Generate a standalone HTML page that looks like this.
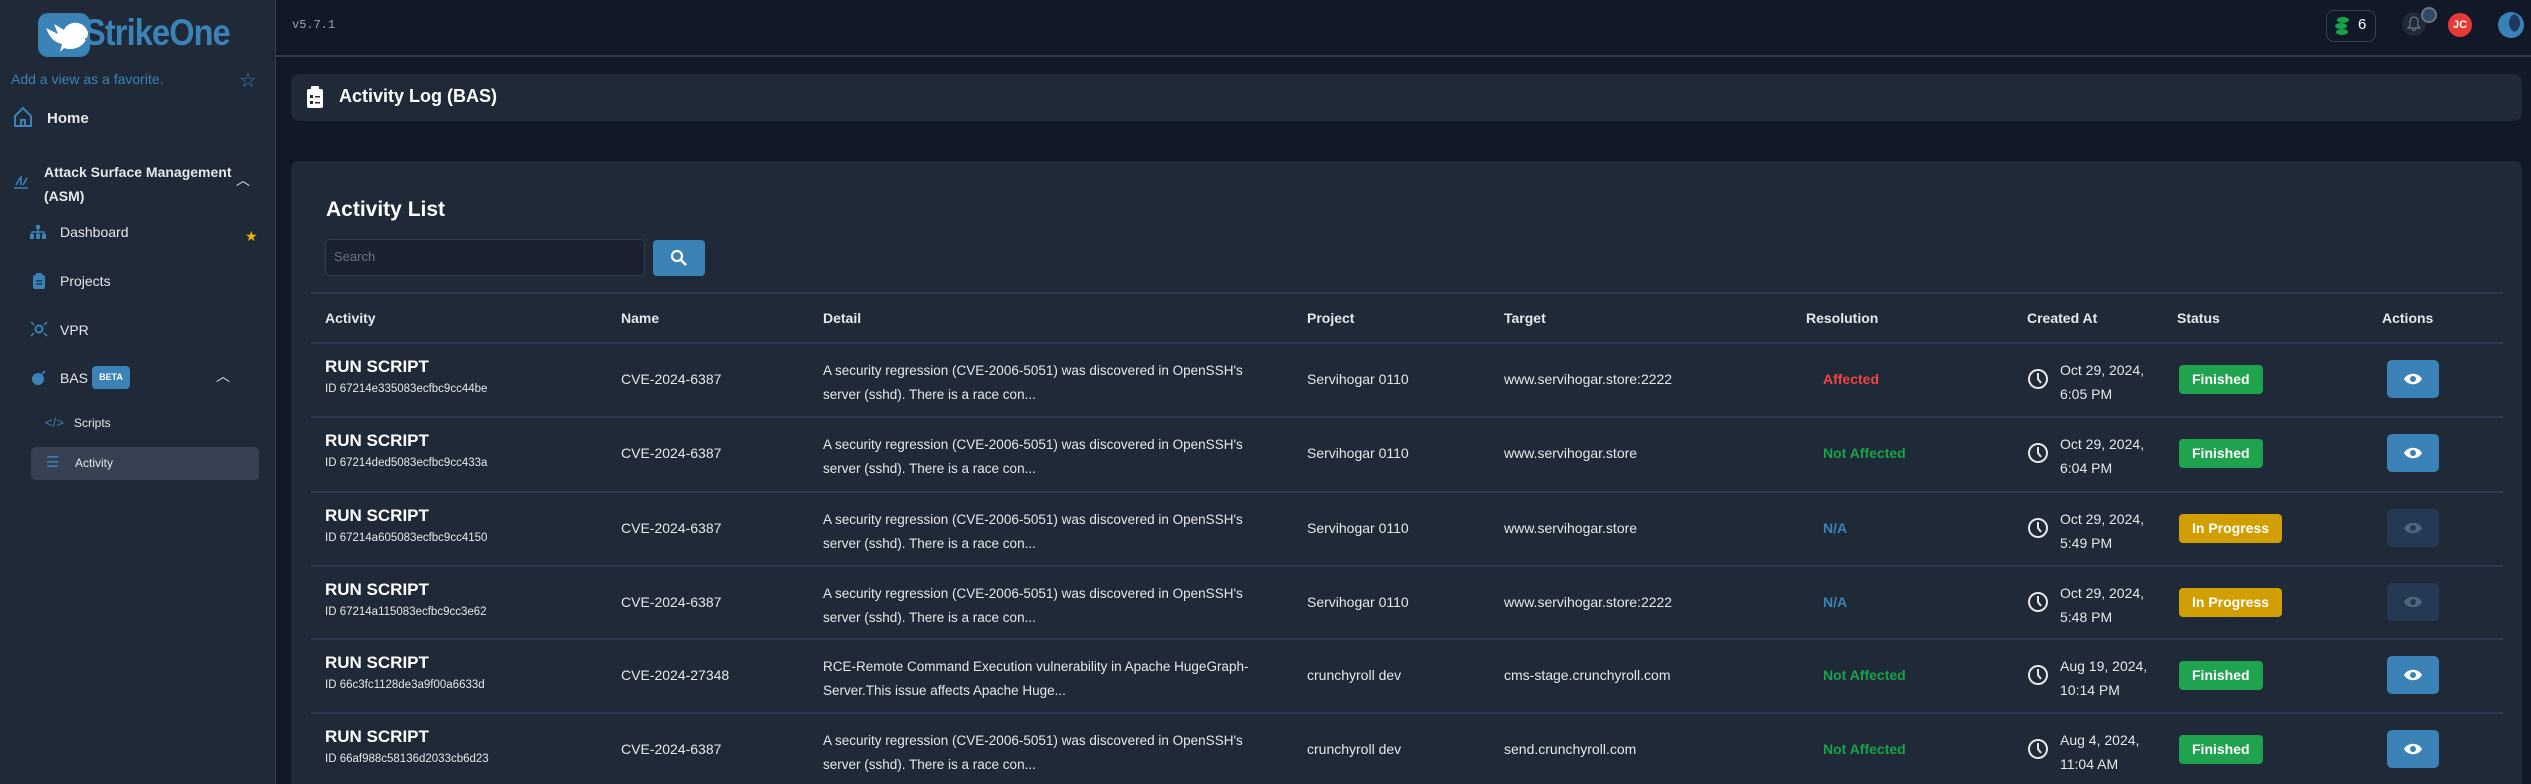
<!DOCTYPE html>
<html><head><meta charset="utf-8"><style>
*{margin:0;padding:0;box-sizing:border-box}
html{width:2531px;height:784px;overflow:hidden}
body{width:2531px;height:784px;overflow:hidden;background:#111827;font-family:"Liberation Sans",sans-serif;color:#e5e7eb;position:relative}
.a{position:absolute;white-space:nowrap}
.sb{position:absolute;left:0;top:0;width:276px;height:784px;background:#1f2937;border-right:1px solid #374151}
.hd{position:absolute;left:276px;top:0;right:0;height:57px;border-bottom:2px solid #2d3748;background:#111827}
.card{position:absolute;background:#1f2937;border-radius:8px}
.line{position:absolute;left:311px;width:2192px;height:2px;background:#2b3a52}
.th{font-weight:bold;font-size:14px;color:#e5e7eb}
.cell{font-size:14px;color:#e5e7eb}
.badge{position:absolute;height:29px;border-radius:4px;color:#fff;font-weight:bold;font-size:14px;line-height:29px;padding:0 13px}
.btn{position:absolute;left:2387px;width:52px;height:38px;border-radius:5px}
</style></head><body>
<div class="sb"></div>
<div class="hd"></div>
<!-- logo -->
<div class="a" style="left:38px;top:13px;width:52px;height:44px;background:#3b82b6;border-radius:10px"></div>
<svg class="a" style="left:40px;top:14px" width="50" height="40" viewBox="0 0 50 40"><path d="M6 14 L18 20 L14 10 L24 16 C28 6 44 6 48 18 C48 30 36 38 24 34 L20 38 L22 30 C14 28 10 24 6 14Z" fill="#fff"/></svg>
<div class="a" style="left:84px;top:12px;font-size:37px;font-weight:bold;color:#3b82b6;letter-spacing:-1px;transform:scaleX(.88);transform-origin:left">StrikeOne</div>
<div class="a" style="left:11px;top:71px;font-size:14px;color:#3b82b6">Add a view as a favorite.</div>
<div class="a" style="left:239px;top:68px;font-size:20px;color:#3b82b6">☆</div>
<svg class="a" style="left:13px;top:106px" width="20" height="22" viewBox="0 0 20 22"><path d="M2 10 L10 2 L18 10 V20 H2 Z M8 20 V14 H12 V20" fill="none" stroke="#3b82b6" stroke-width="2"/></svg>
<div class="a" style="left:47px;top:110px;font-size:15px;font-weight:bold;color:#e5e7eb">Home</div>
<svg class="a" style="left:12px;top:172px" width="18" height="18"><path d="M2 16 H16 M4 13 L8 6 M9 13 V4 M11 13 L15 6" stroke="#3b82b6" stroke-width="1.6" fill="none"/></svg>
<div class="a" style="left:44px;top:160px;font-size:14px;font-weight:bold;line-height:24px;color:#e5e7eb;white-space:normal;width:200px">Attack Surface Management (ASM)</div>
<div class="a" style="left:236px;top:170px;font-size:14px;color:#ddd">︿</div>
<svg class="a" style="left:30px;top:225px" width="16" height="15"><rect x="6" y="0" width="4" height="4" fill="#3b82b6"/><path d="M8 4V7 M2 9V7H14V9 M8 7V9" stroke="#3b82b6" stroke-width="1.5" fill="none"/><rect x="0" y="9" width="4" height="5" fill="#3b82b6"/><rect x="6" y="9" width="4" height="5" fill="#3b82b6"/><rect x="12" y="9" width="4" height="5" fill="#3b82b6"/></svg>
<div class="a" style="left:60px;top:224px;font-size:14px">Dashboard</div>
<div class="a" style="left:245px;top:228px;font-size:14px;color:#f5b301">★</div>
<svg class="a" style="left:33px;top:273px" width="12" height="16"><rect x="0" y="2" width="12" height="14" rx="2" fill="#3b82b6"/><rect x="3" y="0" width="6" height="4" fill="#3b82b6"/><path d="M3 8H9M3 11H9" stroke="#1f2937" stroke-width="1.3"/></svg>
<div class="a" style="left:60px;top:273px;font-size:14px">Projects</div>
<svg class="a" style="left:30px;top:321px" width="18" height="16"><circle cx="9" cy="8" r="3.5" stroke="#3b82b6" stroke-width="2" fill="none"/><path d="M1 1L4 4M17 1L14 4M1 15L4 12M17 15L14 12" stroke="#3b82b6" stroke-width="1.5"/></svg>
<div class="a" style="left:60px;top:322px;font-size:14px">VPR</div>
<svg class="a" style="left:31px;top:370px" width="16" height="16"><circle cx="7" cy="9" r="6" fill="#3b82b6"/><path d="M11 4L14 1" stroke="#3b82b6" stroke-width="1.6"/></svg>
<div class="a" style="left:60px;top:370px;font-size:14px">BAS</div>
<div class="a" style="left:92px;top:366px;width:38px;height:23px;background:#3b82b6;border-radius:4px;color:#fff;font-size:9px;font-weight:bold;text-align:center;line-height:23px">BETA</div>
<div class="a" style="left:216px;top:366px;font-size:14px;color:#ddd">︿</div>
<div class="a" style="left:45px;top:415px;font-size:13px;color:#3b82b6">&lt;/&gt;</div>
<div class="a" style="left:74px;top:416px;font-size:12px">Scripts</div>
<div class="a" style="left:31px;top:447px;width:228px;height:33px;background:#374151;border-radius:5px"></div>
<div class="a" style="left:46px;top:453px;font-size:15px;color:#3b82b6">☰</div>
<div class="a" style="left:75px;top:456px;font-size:12px">Activity</div>
<!-- header -->
<div class="a" style="left:292px;top:18px;font-family:'Liberation Mono',monospace;font-size:12px;color:#9ca3af">v5.7.1</div>
<div class="a" style="left:2326px;top:10px;width:50px;height:32px;border:1px solid #374151;border-radius:8px"></div>
<svg class="a" style="left:2334px;top:16px" width="16" height="20"><ellipse cx="9" cy="4" rx="6" ry="3" fill="#16a34a"/><ellipse cx="7" cy="10" rx="6" ry="3" fill="#16a34a"/><ellipse cx="8" cy="16" rx="6" ry="3" fill="#16a34a"/></svg>
<div class="a" style="left:2358px;top:16px;font-size:15px;color:#fff">6</div>
<div class="a" style="left:2402px;top:12px;width:24px;height:24px;border-radius:50%;background:#1f2937"></div>
<svg class="a" style="left:2407px;top:16px" width="14" height="16"><path d="M7 1C4 1 3 4 3 6V10L1 12H13L11 10V6C11 4 10 1 7 1Z M5 13Q7 16 9 13" fill="none" stroke="#6b7280" stroke-width="1.3"/></svg>
<div class="a" style="left:2421px;top:7px;width:16px;height:16px;border-radius:50%;background:#2c4a66;border:2px solid #6b7280"></div>
<div class="a" style="left:2448px;top:13px;width:24px;height:24px;border-radius:50%;background:#e53935;color:#fff;font-size:11px;font-weight:bold;text-align:center;line-height:24px">JC</div>
<div class="a" style="left:2498px;top:12px;width:26px;height:26px;border-radius:50%;background:#3b82b6"></div>
<div class="a" style="left:2509px;top:14px;width:14px;height:18px;border-radius:50%;background:#1e3a5f;box-shadow:-3px 0 0 #3b82b6 inset"></div>
<!-- title card -->
<div class="card" style="left:291px;top:74px;width:2231px;height:47px"></div>
<svg class="a" style="left:307px;top:86px" width="16" height="22"><rect x="0" y="3" width="16" height="19" rx="2" fill="#fff"/><rect x="4" y="0" width="8" height="5" rx="1" fill="#fff"/><rect x="3" y="9" width="3" height="3" fill="#1f2937"/><rect x="3" y="15" width="3" height="3" fill="#1f2937"/><rect x="8" y="10" width="5" height="1.5" fill="#1f2937"/><rect x="8" y="16" width="5" height="1.5" fill="#1f2937"/></svg>
<div class="a" style="left:339px;top:86px;font-size:18px;font-weight:bold;color:#fff">Activity Log (BAS)</div>
<!-- main card -->
<div class="card" style="left:291px;top:161px;width:2231px;height:623px;border-radius:8px 8px 0 0"></div>
<div class="a" style="left:326px;top:198px;font-size:21px;font-weight:bold;color:#fff">Activity List</div>
<div class="a" style="left:325px;top:239px;width:320px;height:37px;background:#1a2231;border:1px solid #2e3d56;border-radius:5px"></div>
<div class="a" style="left:334px;top:249px;font-size:13px;color:#6b7280">Search</div>
<div class="a" style="left:653px;top:240px;width:52px;height:36px;background:#3b82b6;border-radius:4px"></div>
<svg class="a" style="left:670px;top:249px" width="18" height="18"><circle cx="7" cy="7" r="5" stroke="#fff" stroke-width="2.2" fill="none"/><path d="M11 11L16 16" stroke="#fff" stroke-width="2.5"/></svg>
<div class="line" style="top:292px"></div>
<div class="line" style="top:342px"></div>
<div class="a th" style="left:325px;top:310px">Activity</div>
<div class="a th" style="left:621px;top:310px">Name</div>
<div class="a th" style="left:823px;top:310px">Detail</div>
<div class="a th" style="left:1307px;top:310px">Project</div>
<div class="a th" style="left:1504px;top:310px">Target</div>
<div class="a th" style="left:1806px;top:310px">Resolution</div>
<div class="a th" style="left:2027px;top:310px">Created At</div>
<div class="a th" style="left:2177px;top:310px">Status</div>
<div class="a th" style="left:2382px;top:310px">Actions</div>
<div id="rows"></div>
<script>
var d=[
["67214e335083ecfbc9cc44be","CVE-2024-6387",0,"Servihogar 0110","www.servihogar.store:2222","Affected","#ef4444","Oct 29, 2024,","6:05 PM",1],
["67214ded5083ecfbc9cc433a","CVE-2024-6387",0,"Servihogar 0110","www.servihogar.store","Not Affected","#16a34a","Oct 29, 2024,","6:04 PM",1],
["67214a605083ecfbc9cc4150","CVE-2024-6387",0,"Servihogar 0110","www.servihogar.store","N/A","#3b82b6","Oct 29, 2024,","5:49 PM",0],
["67214a115083ecfbc9cc3e62","CVE-2024-6387",0,"Servihogar 0110","www.servihogar.store:2222","N/A","#3b82b6","Oct 29, 2024,","5:48 PM",0],
["66c3fc1128de3a9f00a6633d","CVE-2024-27348",1,"crunchyroll dev","cms-stage.crunchyroll.com","Not Affected","#16a34a","Aug 19, 2024,","10:14 PM",1],
["66af988c58136d2033cb6d23","CVE-2024-6387",0,"crunchyroll dev","send.crunchyroll.com","Not Affected","#16a34a","Aug 4, 2024,","11:04 AM",1]];
var det=[["A security regression (CVE-2006-5051) was discovered in OpenSSH's","server (sshd). There is a race con..."],["RCE-Remote Command Execution vulnerability in Apache HugeGraph-","Server.This issue affects Apache Huge..."]];
var tops=[342,416,491,565,638,712],h="";
d.forEach(function(r,i){var c=tops[i]+37;
h+='<div class="a" style="left:325px;top:'+(c-22)+'px;font-size:17px;font-weight:bold;color:#fff">RUN SCRIPT</div>';
h+='<div class="a" style="left:325px;top:'+(c+4)+'px;font-size:11.5px;color:#e5e7eb">ID '+r[0]+'</div>';
h+='<div class="a cell" style="left:621px;top:'+(c-8)+'px">'+r[1]+'</div>';
h+='<div class="a cell" style="left:823px;top:'+(c-20)+'px;font-size:13.5px;line-height:24px">'+det[r[2]][0]+'<br>'+det[r[2]][1]+'</div>';
h+='<div class="a cell" style="left:1307px;top:'+(c-8)+'px">'+r[3]+'</div>';
h+='<div class="a cell" style="left:1504px;top:'+(c-8)+'px">'+r[4]+'</div>';
h+='<div class="a" style="left:1823px;top:'+(c-8)+'px;font-size:14px;font-weight:bold;color:'+r[6]+'">'+r[5]+'</div>';
h+='<svg class="a" style="left:2027px;top:'+(c-11)+'px" width="22" height="22"><circle cx="11" cy="11" r="9" stroke="#e5e7eb" stroke-width="2" fill="none"/><path d="M11 5V11L14 15" stroke="#e5e7eb" stroke-width="2" fill="none"/></svg>';
h+='<div class="a cell" style="left:2060px;top:'+(c-21)+'px;line-height:24px">'+r[7]+'<br>'+r[8]+'</div>';
h+= r[9]?'<div class="badge" style="left:2179px;top:'+(c-14)+'px;background:#1fa34f">Finished</div>':'<div class="badge" style="left:2179px;top:'+(c-14)+'px;background:#d19f04">In Progress</div>';
h+='<div class="btn" style="top:'+(c-19)+'px;background:'+(r[9]?'#3b82b6':'#253a52')+'"></div>';
h+='<svg class="a" style="left:2403px;top:'+(c-8)+'px" width="20" height="16"><path d="M1 8C5 1 15 1 19 8C15 15 5 15 1 8Z" fill="'+(r[9]?'#fff':'#55667a')+'"/><circle cx="10" cy="8" r="3" fill="'+(r[9]?'#3b82b6':'#253a52')+'"/></svg>';
if(i<5)h+='<div class="line" style="top:'+tops[i+1]+'px"></div>';
});
document.getElementById('rows').innerHTML=h;
</script>
</body></html>
